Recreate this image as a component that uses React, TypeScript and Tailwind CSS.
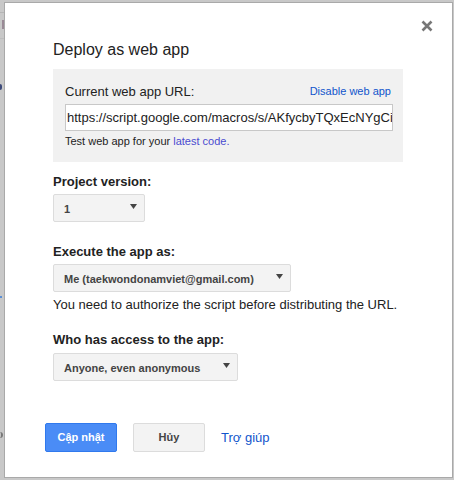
import React from 'react';

const url = 'https://script.google.com/macros/s/AKfycbyTQxEcNYgCi';

function Caret() {
  return (
    <svg width="7" height="5" viewBox="0 0 7 5" className="shrink-0">
      <polygon points="0,0 7,0 3.5,5" fill="#444" />
    </svg>
  );
}

function Select({ value, width }: { value: string; width: string }) {
  return (
    <div
      className={`${width} h-[28px] flex items-center justify-between pl-[10px] pr-[7px] rounded-[2px] border border-[#dcdcdc] bg-[#f3f3f3] text-[11px] font-bold text-[#444]`}
    >
      <span className="pt-[2px]">{value}</span>
      <span className="-mt-[3px]"><Caret /></span>
    </div>
  );
}

// strip of the page that peeks out behind the dialog
function PageEdge() {
  return (
    <div className="w-[4px] h-full flex flex-col overflow-hidden">
      <div className="h-[12px]" />
      <div className="h-px bg-[#b5b5b5]" />
      <div className="h-[7px]" />
      <div className="ml-[2px] w-[2px] h-[9px] bg-[#9a8a96]" />
      <div className="h-[9px]" />
      <div className="h-px bg-[#bdbdbd]" />
      <div className="h-[45px]" />
      <div className="w-[2px] h-[6px] rounded-r-full border-r-2 border-[#3d4a7a]" />
      <div className="h-[206px]" />
      <div className="w-[2px] h-[2px] bg-[#5b8fd6]" />
      <div className="h-[134px]" />
      <div className="w-[3px] h-[6px] rounded-r-full border-r-2 border-[#777]" />
    </div>
  );
}

export default function App(): React.ReactElement {
  return (
    <div className="w-[454px] h-[480px] bg-[#c8c8c8] flex font-['Liberation_Sans',Arial,sans-serif] text-[#222]">
      <PageEdge />

      <div className="relative mt-[2px] w-[449px] h-[476px] border border-[#a9a9a9] bg-white flex flex-col pl-[48px] pt-[37px]">
        <button className="absolute top-[17px] right-[19px] p-0">
          <svg width="12" height="12" viewBox="0 0 12 12">
            <path d="M1.5 1.5 L10.5 10.5 M10.5 1.5 L1.5 10.5" stroke="#777" strokeWidth="2.6" />
          </svg>
        </button>

        <h1 className="h-[20px] text-[16px] leading-[20px]">Deploy as web app</h1>

        <div className="mt-[9px] w-[350px] bg-[#f1f1f1] pt-[15px] pl-[12px] pr-[12px] pb-[14px]">
          <div className="flex items-baseline justify-between">
            <span className="text-[13px] leading-[16px]">Current web app URL:</span>
            <a className="text-[11px] leading-[14px] text-[#1155cc] -translate-y-[1px]">Disable web app</a>
          </div>
          <div className="mt-[4px] w-[328px] h-[27px] border border-[#c8c8c8] bg-white pl-[1px] text-[13px] leading-[25px] whitespace-nowrap overflow-hidden">
            {url}
          </div>
          <p className="mt-[3px] text-[11px] leading-[14px]">
            Test web app for your <a className="text-[#4a4bd0]">latest code.</a>
          </p>
        </div>

        <div className="mt-[12px] text-[13px] leading-[16px] font-bold">Project version:</div>
        <div className="mt-[4px]">
          <Select value="1" width="w-[92px]" />
        </div>

        <div className="mt-[22px] text-[13px] leading-[16px] font-bold">Execute the app as:</div>
        <div className="mt-[4px]">
          <Select value="Me (taekwondonamviet@gmail.com)" width="w-[238px]" />
        </div>
        <p className="mt-[5px] text-[13px] leading-[16px]">
          You need to authorize the script before distributing the URL.
        </p>

        <div className="mt-[19px] text-[13px] leading-[16px] font-bold">Who has access to the app:</div>
        <div className="mt-[5px]">
          <Select value="Anyone, even anonymous" width="w-[185px]" />
        </div>

        <div className="mt-[42px] -ml-[8px] flex items-center gap-[16px]">
          <button className="w-[72px] h-[29px] rounded-[2px] border border-[#3079ed] bg-[#4a8cf6] text-white text-[11px] font-bold">
            Cập nhật
          </button>
          <button className="w-[72px] h-[29px] rounded-[2px] border border-[#dcdcdc] bg-[#f3f3f3] text-[#444] text-[11px] font-bold">
            Hủy
          </button>
          <a className="text-[13px] leading-[16px] text-[#1155cc]">Trợ giúp</a>
        </div>
      </div>
    </div>
  );
}
